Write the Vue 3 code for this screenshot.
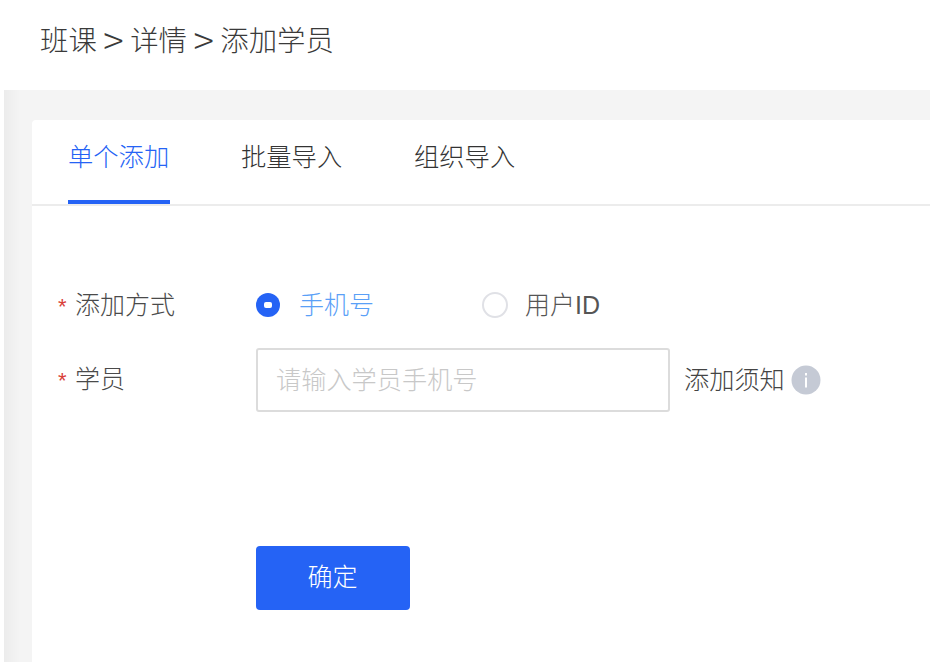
<template>
  <div class="page">
    <div class="crumb">
      <span>班课</span><span class="sep">&gt;</span><span>详情</span><span class="sep">&gt;</span><span>添加学员</span>
    </div>
    <div class="content">
      <div class="card">
        <div class="tabs">
          <div
            v-for="(tab, i) in tabs"
            :key="tab"
            class="tab"
            :class="{ active: i === activeTab }"
            @click="activeTab = i"
          >{{ tab }}</div>
        </div>
        <form class="form" @submit.prevent>
          <div class="row row-type">
            <label class="label"><i>*</i>添加方式</label>
            <div class="radios">
              <div class="radio checked" @click="mode = 'phone'">
                <span class="dot"></span>
                <span class="radio-text">手机号</span>
              </div>
              <div class="radio" @click="mode = 'id'">
                <span class="dot"></span>
                <span class="radio-text">用户ID</span>
              </div>
            </div>
          </div>
          <div class="row row-student">
            <label class="label"><i>*</i>学员</label>
            <input class="input" type="text" placeholder="请输入学员手机号" />
            <span class="notice">添加须知</span>
            <svg class="info" width="30" height="30" viewBox="0 0 30 30">
              <circle cx="15" cy="15" r="14.5" fill="#c5cad5" />
              <rect x="14" y="8" width="2" height="2.5" fill="#fff" />
              <rect x="14" y="12.5" width="2" height="10" fill="#fff" />
            </svg>
          </div>
          <button class="submit" type="submit">确定</button>
        </form>
      </div>
    </div>
  </div>
</template>

<script setup>
import { ref } from 'vue'

const tabs = ['单个添加', '批量导入', '组织导入']
const activeTab = ref(0)
const mode = ref('phone')
</script>

<style>
html,
body {
  margin: 0;
  background: #fff;
  overflow: hidden;
}
</style>

<style scoped>
.page {
  width: 930px;
  height: 662px;
  overflow: hidden;
  font-family: "Liberation Sans", "Noto Sans CJK SC", sans-serif;
  font-weight: 400;
  color: #333;
}

.crumb {
  height: 90px;
  box-sizing: border-box;
  padding: 18px 0 0 40px;
  font-family: "Noto Sans CJK SC", sans-serif;
  font-weight: 300;
  font-size: 28.4px;
  line-height: 42px;
  color: #3a3a3a;
  display: flex;
}

.sep {
  margin: 0 6.5px;
  font-size: 38px;
  line-height: 42px;
}

.content {
  margin-left: 4px;
  height: 572px;
  box-sizing: border-box;
  padding: 30px 0 0 28px;
  background: linear-gradient(90deg, #ececec 0, #f4f4f4 16px);
}

.card {
  height: 100%;
  background: #fff;
  border-radius: 4px 0 0 0;
}

.tabs {
  display: flex;
  height: 86px;
  box-sizing: border-box;
  padding-left: 36px;
  gap: 71px;
  border-bottom: 2px solid #ececec;
}

.tab {
  height: 84px;
  box-sizing: border-box;
  padding-top: 16px;
  width: 102px;
  font-family: "Noto Sans CJK SC", sans-serif;
  font-weight: 300;
  font-size: 25.3px;
  line-height: 38px;
  white-space: nowrap;
  cursor: pointer;
}

.tab.active {
  color: #2563f5;
  border-bottom: 4px solid #2563f5;
}

.form {
  padding-left: 26px;
}

.row {
  display: flex;
  align-items: center;
}

.row-type {
  margin-top: 80px;
  height: 38px;
}

.row-student {
  margin-top: 24px;
  height: 64px;
}

.label {
  width: 198px;
  padding-bottom: 4px;
  font-weight: 300;
  font-size: 25px;
  color: #4a4a4a;
  white-space: nowrap;
}

.row-student .label {
  padding-bottom: 6px;
}

.label i {
  display: inline-block;
  width: 17px;
  font-style: normal;
  font-size: 22px;
  color: #d9403a;
}

.radios {
  display: flex;
}

.radio {
  display: flex;
  align-items: center;
  width: 226px;
  font-weight: 300;
  font-size: 25px;
  color: #555;
  cursor: pointer;
}

.radio-text {
  margin-left: -1px;
  padding-bottom: 4px;
}

.radio.checked {
  color: #5aa0f7;
}

.dot {
  width: 26px;
  height: 26px;
  box-sizing: border-box;
  border: 2px solid #e0e1e6;
  border-radius: 50%;
  margin-right: 18px;
}

.radio.checked .dot {
  position: relative;
  width: 24px;
  height: 24px;
  margin-right: 20px;
  border: 0;
  background: #2563f5;
}

.radio.checked .dot::after {
  content: "";
  position: absolute;
  left: 8px;
  top: 9px;
  width: 8px;
  height: 6px;
  border-radius: 2px;
  background: #fff;
}

.input {
  width: 414px;
  height: 64px;
  box-sizing: border-box;
  padding: 0 18px 4px;
  border: 2px solid #dcdcdc;
  border-radius: 3px;
  outline: none;
  font-family: "Noto Sans CJK SC", sans-serif;
  font-weight: 300;
  font-size: 25.2px;
  color: #333;
}

.input::placeholder {
  color: #c8c8c8;
}

.notice {
  margin-left: 14px;
  padding-bottom: 4px;
  font-weight: 300;
  font-size: 25.2px;
  color: #444;
  white-space: nowrap;
}

.info {
  margin-left: 6px;
}

.submit {
  display: block;
  margin: 134px 0 0 198px;
  padding: 0 1px 6px 0;
  width: 154px;
  height: 64px;
  border: 0;
  border-radius: 4px;
  background: #2563f5;
  color: #fff;
  font-family: "Noto Sans CJK SC", sans-serif;
  font-weight: 300;
  font-size: 25px;
  cursor: pointer;
}
</style>
